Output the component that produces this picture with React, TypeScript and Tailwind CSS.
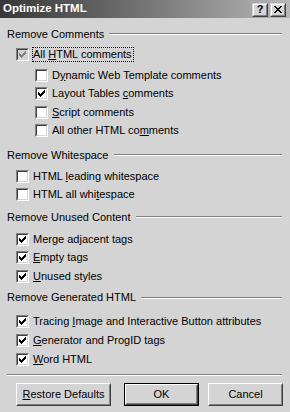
import React from "react";

type Label = [string, string, string];

const sections: { title: string; items: { label: Label; checked: boolean; indent?: boolean }[] }[] = [
  {
    title: "Remove Comments",
    items: [
      { label: ["D", "y", "namic Web Template comments"], checked: false, indent: true },
      { label: ["Layout Tables ", "c", "omments"], checked: true, indent: true },
      { label: ["", "S", "cript comments"], checked: false, indent: true },
      { label: ["All other HTML co", "m", "ments"], checked: false, indent: true },
    ],
  },
  {
    title: "Remove Whitespace",
    items: [
      { label: ["HTML ", "l", "eading whitespace"], checked: false },
      { label: ["HTML all whi", "t", "espace"], checked: false },
    ],
  },
  {
    title: "Remove Unused Content",
    items: [
      { label: ["Merge ad", "j", "acent tags"], checked: true },
      { label: ["", "E", "mpty tags"], checked: true },
      { label: ["", "U", "nused styles"], checked: true },
    ],
  },
  {
    title: "Remove Generated HTML",
    items: [
      { label: ["Tracing ", "I", "mage and Interactive Button attributes"], checked: true },
      { label: ["", "G", "enerator and ProgID tags"], checked: true },
      { label: ["", "W", "ord HTML"], checked: true },
    ],
  },
];

// margins above each heading / first row, and row heights, tuned against the screenshot
const headingGap = ["mt-[8px]", "mt-[7px]", "mt-[5px]", "mt-[4px]"];
const firstRowGap = ["mt-[3px]", "mt-[4px]", "mt-[5px]", "mt-[6px]"];
const rowHeight = ["h-[18.5px]", "h-[18.5px]", "h-[18.5px]", "h-[19px]"];

function Tick({ color }: { color: string }) {
  const cols = [2, 3, 4, 3, 2, 1, 0];
  return (
    <svg width="7" height="7" viewBox="0 0 7 7" shapeRendering="crispEdges" className="absolute left-[1px] top-[1px]">
      {cols.map((y, x) => (
        <rect key={x} x={x} y={y} width="1" height="3" fill={color} />
      ))}
    </svg>
  );
}

function CheckBox({ checked, disabled }: { checked: boolean; disabled?: boolean }) {
  return (
    <div className="w-[13px] h-[13px] shrink-0 border border-t-[#808080] border-l-[#808080] border-b-white border-r-white">
      <div
        className={`relative w-full h-full border border-t-[#404040] border-l-[#404040] border-b-[#d4d4d4] border-r-[#d4d4d4] ${
          disabled ? "bg-[#d4d4d4]" : "bg-white"
        }`}
      >
        {checked && <Tick color={disabled ? "#808080" : "#000000"} />}
      </div>
    </div>
  );
}

function Text({ label }: { label: Label }) {
  return (
    <span className="whitespace-pre">
      {label[0]}
      <u className="underline-offset-[1px]">{label[1]}</u>
      {label[2]}
    </span>
  );
}

function Heading({ title, className }: { title: string; className: string }) {
  return (
    <div className={`flex items-center h-[16px] pl-[7px] pr-[8px] ${className}`}>
      <span>{title}</span>
      <div className="flex-1 ml-[5px] h-[2px] border-t border-t-[#808080] border-b border-b-white" />
    </div>
  );
}

function Button({ children, width, isDefault }: { children: React.ReactNode; width: string; isDefault?: boolean }) {
  const face = (
    <div className="w-full h-full border border-t-white border-l-white border-b-[#404040] border-r-[#404040]">
      <div className="w-full h-full flex items-center justify-center border border-t-[#d4d4d4] border-l-[#d4d4d4] border-b-[#808080] border-r-[#808080]">
        {children}
      </div>
    </div>
  );
  return <div className={`${width} h-[23px] ${isDefault ? "border border-black" : ""}`}>{face}</div>;
}

function CaptionButton({ children }: { children: React.ReactNode }) {
  return (
    <div className="w-[16px] h-[14px] border border-t-[#d4d4d4] border-l-[#d4d4d4] border-b-[#404040] border-r-[#404040] bg-[#d4d4d4]">
      <div className="w-full h-full flex items-center justify-center border border-t-white border-l-white border-b-[#808080] border-r-[#808080]">
        {children}
      </div>
    </div>
  );
}

export default function App() {
  return (
    <div className="w-[290px] h-[412px] overflow-hidden bg-[#d4d4d4] text-black text-[11px] leading-none font-['Liberation_Sans',Arial,sans-serif]">
      {/* Title bar */}
      <div className="h-[18px] flex items-center pl-[3px] pr-[4px] bg-gradient-to-r from-[#383838] to-[#b8b8b8]">
        <span className="text-white font-bold text-[11.5px]">Optimize HTML</span>
        <div className="ml-auto flex gap-[2px] mt-[1px]">
          <CaptionButton>
            <span className="font-bold text-[11px] leading-none">?</span>
          </CaptionButton>
          <CaptionButton>
            <svg width="8" height="7" viewBox="0 0 8 7" shapeRendering="crispEdges">
              {[0, 1, 2, 3, 4, 5, 6].map((i) => (
                <g key={i}>
                  <rect x={i} y={i} width="2" height="1" fill="#000" />
                  <rect x={6 - i} y={i} width="2" height="1" fill="#000" />
                </g>
              ))}
            </svg>
          </CaptionButton>
        </div>
      </div>

      {sections.map((s, si) => (
        <div key={s.title}>
          <Heading title={s.title} className={headingGap[si]} />
          {si === 0 && (
            <div className="flex items-center h-[18px] mt-[3px] pl-[16px]">
              <CheckBox checked disabled />
              <span className="ml-[3px] border border-dotted border-black pr-[1px] py-[1px]">
                <Text label={["All ", "H", "TML comments"]} />
              </span>
            </div>
          )}
          {s.items.map((it, i) => (
            <div
              key={it.label.join("")}
              className={`flex items-center ${rowHeight[si]} ${it.indent ? "pl-[35px]" : "pl-[16px]"} ${
                i === 0 ? firstRowGap[si] : ""
              }`}
            >
              <CheckBox checked={it.checked} />
              <span className="ml-[4px]">
                <Text label={it.label} />
              </span>
            </div>
          ))}
        </div>
      ))}

      {/* Separator */}
      <div className="mt-[5px] ml-[7px] mr-[8px] h-[2px] border-t border-t-[#808080] border-b border-b-white" />

      {/* Buttons */}
      <div className="flex mt-[7px] pl-[16px]">
        <Button width="w-[95px]">
          <Text label={["", "R", "estore Defaults"]} />
        </Button>
        <div className="ml-[13px]">
          <Button width="w-[75px]" isDefault>
            OK
          </Button>
        </div>
        <div className="ml-[9px]">
          <Button width="w-[75px]">Cancel</Button>
        </div>
      </div>
    </div>
  );
}
